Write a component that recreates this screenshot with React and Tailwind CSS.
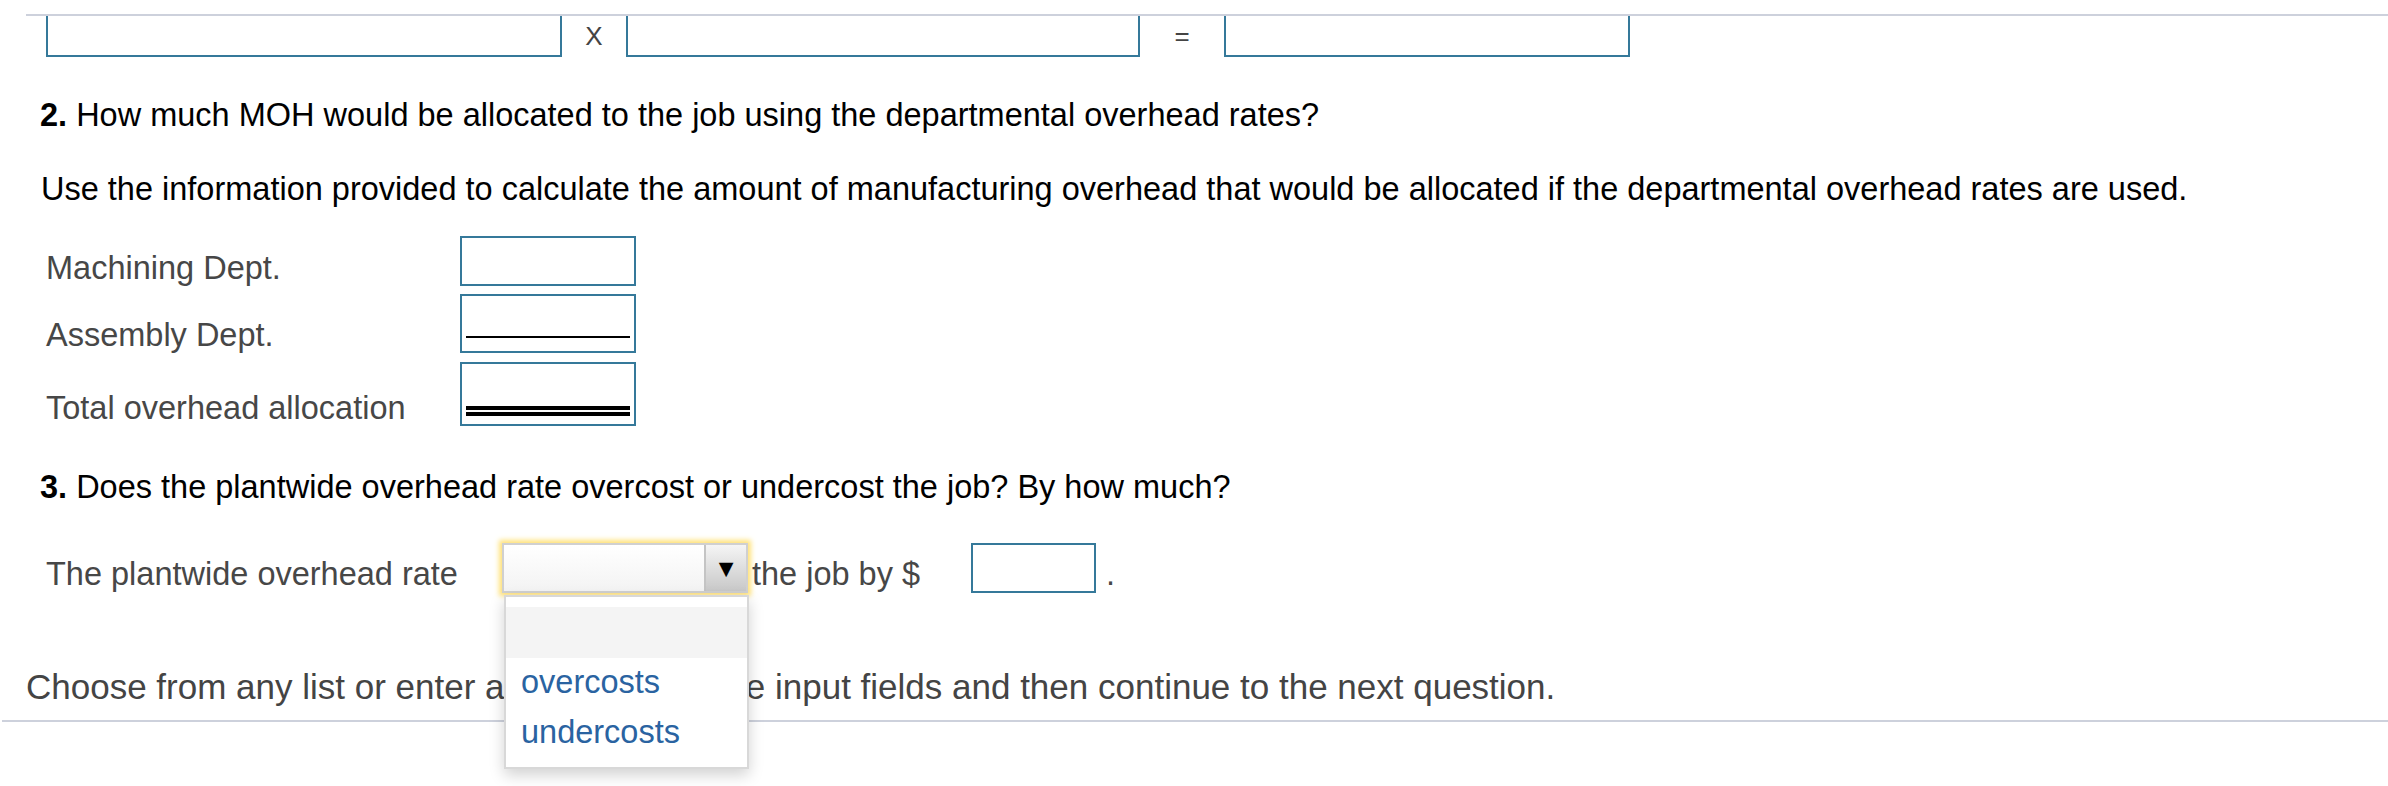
const BOX = 'border-2 border-[#35799a] bg-white';

function DeptRow({ label, children, className = '' }) {
  return (
    <div className={`flex items-end ${className}`}>
      <span className="w-[460px] pl-[46px] leading-[36px] text-[#474747]">{label}</span>
      {children}
    </div>
  );
}

export default function App() {
  return (
    <div
      className="relative w-[2388px] h-[786px] overflow-hidden bg-white text-[32.5px] text-black"
      style={{ fontFamily: '"Liberation Sans", Arial, Helvetica, sans-serif' }}
    >
      <div className="pt-[14px]">
        <div className="ml-[26px] h-[2px] bg-[#cdd1dc]" />
        <div className="flex items-center pl-[46px]">
          <div className={`${BOX} border-t-0 w-[516px] h-[41px]`} />
          <span className="w-[64px] text-center text-[26px] leading-[41px] text-[#444]">X</span>
          <div className={`${BOX} border-t-0 w-[514px] h-[41px]`} />
          <span className="w-[84px] text-center text-[26px] leading-[41px] text-[#444]">=</span>
          <div className={`${BOX} border-t-0 w-[406px] h-[41px]`} />
        </div>
      </div>

      <p className="mt-[38px] pl-[40px] leading-[40px]">
        <b>2.</b> How much MOH would be allocated to the job using the departmental overhead rates?
      </p>
      <p className="mt-[34px] pl-[41px] leading-[40px]">
        Use the information provided to calculate the amount of manufacturing overhead that would be allocated if the
        departmental overhead rates are used.
      </p>

      <div className="mt-[27px]">
        <DeptRow label="Machining Dept.">
          <div className={`${BOX} w-[176px] h-[50px]`} />
        </DeptRow>
        <DeptRow label="Assembly Dept." className="mt-[8px]">
          <div className={`${BOX} w-[176px] h-[59px] flex items-end px-[4px] pb-[13px]`}>
            <div className="h-[2px] w-full bg-black" />
          </div>
        </DeptRow>
        <DeptRow label="Total overhead allocation" className="mt-[9px]">
          <div className={`${BOX} w-[176px] h-[64px] flex flex-col justify-end px-[4px] pb-[8px] gap-[2px]`}>
            <div className="h-[4px] w-full bg-black" />
            <div className="h-[4px] w-full bg-black" />
          </div>
        </DeptRow>
      </div>

      <p className="mt-[41px] pl-[40px] leading-[40px]">
        <b>3.</b> Does the plantwide overhead rate overcost or undercost the job? By how much?
      </p>

      <div className="mt-[36px] flex items-end">
        <span className="w-[502px] pl-[46px] mb-[1px] leading-[36px] text-[#474747]">The plantwide overhead rate</span>
        <div className="flex h-[50px] w-[246px] border-2 border-[#d0d0d0] bg-gradient-to-b from-white to-[#f3f3f3] shadow-[0_0_5px_3px_#ffe27a]">
          <div className="flex-1" />
          <div className="flex w-[42px] items-center justify-center border-l-2 border-[#c4c4c4] bg-gradient-to-b from-[#f5f5f5] to-[#c8c8c8] text-[25px] leading-none text-black">
            ▼
          </div>
        </div>
        <span className="w-[223px] pl-[4px] mb-[1px] leading-[36px] text-[#474747]">the job by $</span>
        <div className={`${BOX} w-[125px] h-[50px]`} />
        <span className="ml-[10px] mb-[1px] leading-[36px] text-[#474747]">.</span>
      </div>

      <p className="mt-[74px] pl-[26px] text-[35px] leading-[40px] text-[#444]">
        Choose from any list or enter any number in the input fields and then continue to the next question.
      </p>
      <div className="mt-[13px] ml-[2px] h-[2px] bg-[#cdd1dc]" />

      <div className="absolute left-[504px] top-[595px] w-[245px] h-[174px] border-2 border-[#d8d8d8] bg-white pt-[10px] shadow-[0_6px_14px_rgba(0,0,0,0.18)]">
        <div className="h-[51px] bg-[#f4f4f4]" />
        <div className="pl-[15px] leading-[50px] text-[#2a63a1]">
          <div className="-mt-[1px]">overcosts</div>
          <div>undercosts</div>
        </div>
      </div>
    </div>
  );
}
